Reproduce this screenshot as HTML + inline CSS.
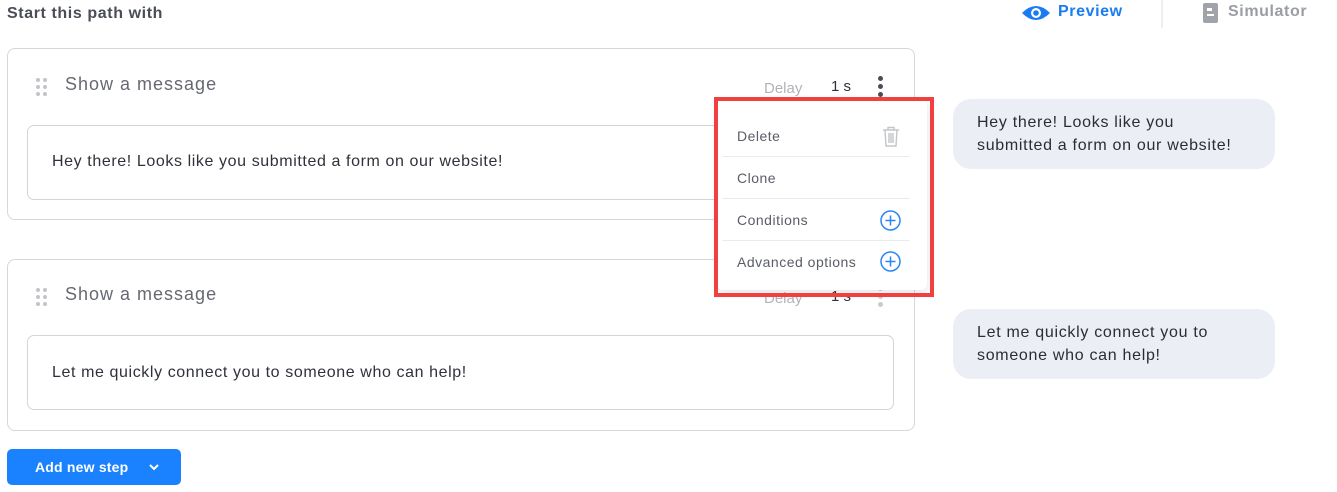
<!DOCTYPE html>
<html><head><style>
body{margin:0;width:1337px;height:492px;background:#fff;position:relative;overflow:hidden;font-family:"Liberation Sans",sans-serif;}
.a{position:absolute;white-space:nowrap;}
.card{position:absolute;left:7px;width:908px;height:172px;border:1px solid #d6d8dc;border-radius:8px;box-sizing:border-box;}
.inner{position:absolute;left:20px;width:867px;height:75px;border:1px solid #d3d5da;border-radius:7px;box-sizing:border-box;}
.title{font-size:18px;color:#666970;letter-spacing:1px;}
.msg{font-size:16px;color:#2f323a;letter-spacing:0.6px;}
.gray{color:#b0b3b8;font-size:15px;}
.dot{position:absolute;width:4px;height:4px;border-radius:50%;background:#c2c4c8;}
.kd{position:absolute;width:5px;height:5px;border-radius:50%;background:#4a4d55;}
.bub{position:absolute;left:953px;width:322px;height:70px;background:#eceef6;border-radius:18px;}
.bub div{position:absolute;left:24px;top:12px;font-size:16px;line-height:23px;color:#2a2d36;letter-spacing:0.7px;}
.it{position:absolute;left:737px;font-size:14px;color:#5a5d66;letter-spacing:0.5px;}
.ln{position:absolute;left:722px;width:188px;height:1px;background:#eaebee;}
</style></head><body>
<div class="a" style="left:7px;top:5px;font-size:16px;font-weight:bold;color:#4a4d55;letter-spacing:0.6px;">Start this path with</div>

<svg class="a" style="left:1021px;top:3px" width="30" height="20" viewBox="0 0 30 20"><path d="M1 10 Q15 -4 29 10 Q15 24 1 10Z" fill="#1a7cf0"/><circle cx="15" cy="10" r="5" fill="#fff"/><circle cx="15" cy="10" r="2.8" fill="#1a7cf0"/></svg>
<div class="a" style="left:1058px;top:3px;font-size:16px;font-weight:bold;color:#1a7cf0;letter-spacing:0.6px;">Preview</div>
<div class="a" style="left:1161px;top:0;width:2px;height:28px;background:#eceef0;"></div>
<svg class="a" style="left:1203px;top:3px" width="15" height="20" viewBox="0 0 15 20"><rect x="0" y="0" width="15" height="20" rx="2" fill="#a0a3a9"/><rect x="4" y="5" width="5" height="3" fill="#fff"/><rect x="4" y="11" width="7" height="2" fill="#fff"/></svg>
<div class="a" style="left:1228px;top:3px;font-size:16px;font-weight:bold;color:#9a9da3;letter-spacing:0.6px;">Simulator</div>

<div class="card" style="top:48px"></div>
<div class="card" style="top:259px"></div>

<!-- card 1 -->
<div class="dot" style="left:36px;top:78px"></div><div class="dot" style="left:43px;top:78px"></div>
<div class="dot" style="left:36px;top:85px"></div><div class="dot" style="left:43px;top:85px"></div>
<div class="dot" style="left:36px;top:92px"></div><div class="dot" style="left:43px;top:92px"></div>
<div class="a title" style="left:65px;top:74px">Show a message</div>
<div class="a gray" style="left:764px;top:80px">Delay</div>
<div class="a" style="left:831px;top:78px;font-size:15px;color:#2f323a">1 s</div>
<div class="kd" style="left:878px;top:76px"></div><div class="kd" style="left:878px;top:84px"></div><div class="kd" style="left:878px;top:92px"></div>
<div class="inner" style="left:27px;top:125px"></div>
<div class="a msg" style="left:52px;top:153px">Hey there! Looks like you submitted a form on our website!</div>

<!-- card 2 -->
<div class="dot" style="left:36px;top:288px"></div><div class="dot" style="left:43px;top:288px"></div>
<div class="dot" style="left:36px;top:295px"></div><div class="dot" style="left:43px;top:295px"></div>
<div class="dot" style="left:36px;top:302px"></div><div class="dot" style="left:43px;top:302px"></div>
<div class="a title" style="left:65px;top:284px">Show a message</div>
<div class="a gray" style="left:764px;top:290px">Delay</div>
<div class="a" style="left:831px;top:288px;font-size:15px;color:#2f323a">1 s</div>
<div class="kd" style="left:878px;top:286px;background:#c9cbcf"></div><div class="kd" style="left:878px;top:294px;background:#c9cbcf"></div><div class="kd" style="left:878px;top:302px;background:#c9cbcf"></div>
<div class="inner" style="left:27px;top:335px"></div>
<div class="a msg" style="left:52px;top:364px">Let me quickly connect you to someone who can help!</div>

<!-- dropdown -->
<div class="a" style="left:717px;top:100px;width:210px;height:190px;background:#fff;border-radius:6px;box-shadow:0 2px 8px rgba(0,0,0,.12);"></div>
<div class="a" style="left:714px;top:97px;width:220px;height:200px;border:4px solid #f04040;box-sizing:border-box;"></div>
<div class="it" style="top:128px">Delete</div>
<svg class="a" style="left:882px;top:126px" width="18" height="21" viewBox="0 0 18 21"><g fill="none" stroke="#c3c5c9" stroke-width="1.4"><path d="M1 4H17M6 4V1.5H12V4"/><path d="M3 4L4 20H14L15 4"/><path d="M7 7V17M9 7V17M11 7V17"/></g></svg>
<div class="ln" style="top:156px"></div>
<div class="it" style="top:170px">Clone</div>
<div class="ln" style="top:198px"></div>
<div class="it" style="top:212px">Conditions</div>
<svg class="a" style="left:880px;top:210px" width="21" height="21" viewBox="0 0 21 21"><g fill="none" stroke="#2a86f5" stroke-width="1.5"><circle cx="10.5" cy="10.5" r="9.5"/><path d="M10.5 5.5V15.5M5.5 10.5H15.5"/></g></svg>
<div class="ln" style="top:240px"></div>
<div class="it" style="top:254px">Advanced options</div>
<svg class="a" style="left:880px;top:251px" width="21" height="21" viewBox="0 0 21 21"><g fill="none" stroke="#2a86f5" stroke-width="1.5"><circle cx="10.5" cy="10.5" r="9.5"/><path d="M10.5 5.5V15.5M5.5 10.5H15.5"/></g></svg>

<div class="bub" style="top:99px"><div>Hey there! Looks like you<br>submitted a form on our website!</div></div>
<div class="bub" style="top:309px"><div>Let me quickly connect you to<br>someone who can help!</div></div>

<div class="a" style="left:7px;top:449px;width:174px;height:36px;background:#1a82ff;border-radius:5px;"></div>
<div class="a" style="left:35px;top:459px;font-size:14px;font-weight:bold;color:#fff;letter-spacing:0.2px;">Add new step</div>
<svg class="a" style="left:148px;top:463px" width="12" height="8" viewBox="0 0 12 8"><path d="M2 2L6 6L10 2" fill="none" stroke="#fff" stroke-width="2"/></svg>
</body></html>
